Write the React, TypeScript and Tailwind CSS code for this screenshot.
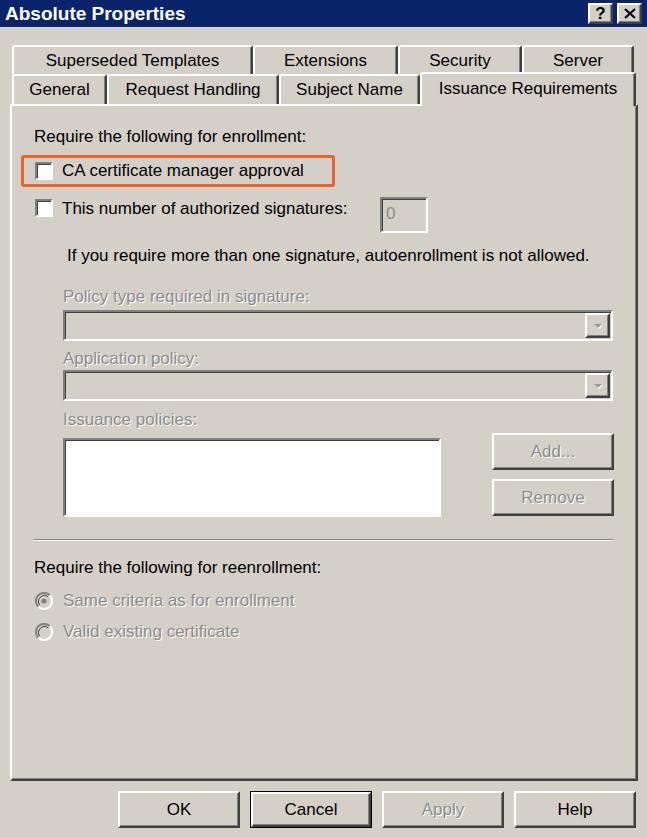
import React from "react";

const raised =
	"border-2 border-t-white border-l-white border-r-[#404040] border-b-[#404040] shadow-[inset_-1px_-1px_0_#808080]";
const sunken =
	"border-2 border-t-[#808080] border-l-[#808080] border-r-white border-b-white shadow-[inset_1px_1px_0_#404040]";
const disabledText = "text-[#8c8c8c] [text-shadow:1px_1px_0_#ffffff]";

const Checkbox = () => <div className={`w-[18px] h-[18px] shrink-0 bg-white ${sunken}`} />;

const Radio = ({ checked }: { checked?: boolean }) => (
	<svg width="18" height="18" viewBox="0 0 18 18" className="shrink-0">
		<circle cx="9" cy="9" r="8" fill="#d4d0c8" />
		<path d="M 3.3 14.7 A 8 8 0 0 1 14.7 3.3" stroke="#808080" strokeWidth="2" fill="none" />
		<path d="M 14.7 3.3 A 8 8 0 0 1 3.3 14.7" stroke="#ffffff" strokeWidth="2" fill="none" />
		<path d="M 4.8 13.2 A 6 6 0 0 1 13.2 4.8" stroke="#404040" strokeWidth="1" fill="none" />
		{checked && <circle cx="9" cy="9" r="2.6" fill="#808080" />}
	</svg>
);

const Combo = () => (
	<div className={`ml-[51px] w-[550px] h-[31px] bg-[#d4d0c8] flex justify-end items-center pr-[1px] ${sunken}`}>
		<div className={`w-[25px] h-[25px] bg-[#d4d0c8] flex items-center justify-center ${raised}`}>
			<svg width="10" height="6" viewBox="0 0 10 6">
				<polygon points="1,1 9,1 5,5" fill="#ffffff" transform="translate(1,1)" />
				<polygon points="1,1 9,1 5,5" fill="#9a9a9a" />
			</svg>
		</div>
	</div>
);

const Tab = ({ label, w, h, selected }: { label: string; w: string; h?: string; selected?: boolean }) => (
	<div
		className={`${w} ${h ?? "h-full"} shrink-0 flex items-center justify-center bg-[#d4d0c8] border-t-2 border-l-2 border-t-white border-l-white border-r-2 border-r-[#404040] rounded-t-[3px] shadow-[inset_-1px_0_0_#808080] ${
			selected ? "relative z-10 -mb-[2px] pb-[3px]" : ""
		}`}
	>
		<span className="text-[17px] leading-[20px] text-black whitespace-nowrap">{label}</span>
	</div>
);

const Btn = ({ label, disabled, focused, extra }: { label: string; disabled?: boolean; focused?: boolean; extra?: string }) => (
	<div className={`w-[122px] h-[37px] ${focused ? "border border-black" : ""} ${extra ?? ""}`}>
		<div
			className={`w-full h-full bg-[#d4d0c8] flex items-center justify-center text-[17px] ${raised} ${
				disabled ? disabledText : "text-black"
			}`}
		>
			{label}
		</div>
	</div>
);

export default function App() {
	return (
		<div className="w-[647px] h-[837px] bg-[#d4d0c8] overflow-hidden font-['Liberation_Sans',Arial,sans-serif]">
			{/* Title bar */}
			<div className="h-[27px] bg-[#0a246a] flex items-center pl-[5px] pr-[5px]">
				<span className="text-white font-bold text-[19px] leading-[22px] flex-1">Absolute Properties</span>
				<div className="flex gap-[4px]">
					<div className={`w-[25px] h-[21px] bg-[#d4d0c8] flex items-center justify-center ${raised}`}>
						<span className="font-bold text-[17px] leading-none text-black">?</span>
					</div>
					<div className={`w-[25px] h-[21px] bg-[#d4d0c8] flex items-center justify-center ${raised}`}>
						<svg width="12" height="11" viewBox="0 0 12 11">
							<path d="M1 1 L11 10 M11 1 L1 10" stroke="#000" strokeWidth="2.2" />
						</svg>
					</div>
				</div>
			</div>

			{/* Tabs */}
			<div className="mt-[18px] pl-[12px]">
				<div className="flex h-[29px]">
					<Tab label="Superseded Templates" w="w-[241px]" />
					<Tab label="Extensions" w="w-[145px]" />
					<Tab label="Security" w="w-[124px]" />
					<Tab label="Server" w="w-[112px]" />
				</div>
				<div className="flex h-[30px] items-end">
					<Tab label="General" w="w-[95px]" />
					<Tab label="Request Handling" w="w-[172px]" />
					<Tab label="Subject Name" w="w-[141px]" />
					<Tab label="Issuance Requirements" w="w-[216px]" h="h-[34px]" selected />
				</div>
			</div>

			{/* Panel */}
			<div className={`ml-[10px] w-[628px] h-[677px] ${raised} flex flex-col text-[17px] leading-[20px] text-black`}>
				<div className="mt-[21px] ml-[22px]">Require the following for enrollment:</div>

				<div className="mt-[8px] ml-[9px] w-[314px] h-[32px] border-[3px] border-[#e9652f] rounded-[3px] flex items-center pl-[11px] gap-[9px]">
					<Checkbox />
					<span>CA certificate manager approval</span>
				</div>

				<div className="mt-[10px] ml-[23px] flex items-start">
					<div className="mt-[2px]">
						<Checkbox />
					</div>
					<span className="ml-[9px] mt-[2px] w-[318px]">This number of authorized signatures:</span>
					<div className={`w-[48px] h-[36px] bg-[#d4d0c8] pl-[4px] pt-[5px] text-[#8c8c8c] ${sunken}`}>0</div>
				</div>

				<div className="mt-[13px] ml-[55px]">If you require more than one signature, autoenrollment is not allowed.</div>

				<div className={`mt-[21px] ml-[51px] ${disabledText}`}>Policy type required in signature:</div>
				<div className="mt-[3px]">
					<Combo />
				</div>

				<div className={`mt-[8px] ml-[51px] ${disabledText}`}>Application policy:</div>
				<div className="mt-[1px]">
					<Combo />
				</div>

				<div className={`mt-[9px] ml-[51px] ${disabledText}`}>Issuance policies:</div>
				<div className="mt-[3px] ml-[51px] flex items-start gap-[51px]">
					<div className={`mt-[5px] w-[378px] h-[79px] bg-white ${sunken}`} />
					<div className="flex flex-col gap-[9px]">
						<Btn label="Add..." disabled />
						<Btn label="Remove" disabled />
					</div>
				</div>

				<div className="mt-[22px] ml-[22px] w-[579px] border-t border-t-[#808080] border-b border-b-white" />

				<div className="mt-[17px] ml-[22px]">Require the following for reenrollment:</div>

				<div className="mt-[13px] ml-[23px] flex items-center gap-[10px]">
					<Radio checked />
					<span className={disabledText}>Same criteria as for enrollment</span>
				</div>
				<div className="mt-[11px] ml-[23px] flex items-center gap-[10px]">
					<Radio />
					<span className={disabledText}>Valid existing certificate</span>
				</div>
			</div>

			{/* Dialog buttons */}
			<div className="mt-[10px] flex justify-end gap-[10px] pr-[11px]">
				<Btn label="OK" />
				<Btn label="Cancel" focused />
				<Btn label="Apply" disabled />
				<Btn label="Help" />
			</div>
		</div>
	);
}
